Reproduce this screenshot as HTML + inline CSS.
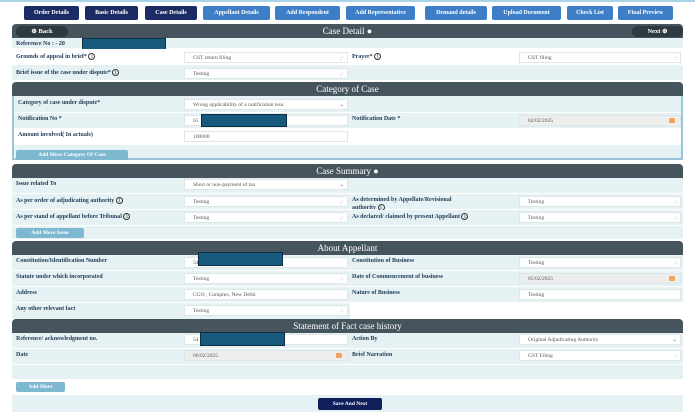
<!DOCTYPE html>
<html><head><style>
*{margin:0;padding:0;box-sizing:border-box}
body{width:695px;height:420px;background:#fff;font-family:"Liberation Serif",serif;position:relative;overflow:hidden}
.a{position:absolute}
.nb{position:absolute;top:6px;height:14px;border-radius:2px;color:#fff;font-size:6px;text-align:center;line-height:14px;font-weight:bold}
.dk{background:#1b2b63}.lt{background:#3d7ec6}
.hd{position:absolute;left:12px;width:671px;height:14px;background:#46545d;color:#fff;font-size:9px;text-align:center;line-height:14px;border-radius:4px 4px 0 0}
.row{position:absolute;left:12px;width:671px;background:#e5f1f2;border-bottom:1px solid #fff}
.row.w{background:#fff}
.lb{position:absolute;font-size:6px;font-weight:bold;color:#1e3a56;line-height:7px}
.in{position:absolute;height:11px;background:#fff;border:1px solid #dde6e8;font-size:5.5px;color:#555;line-height:10px;padding-left:8px}
.in.g{background:#eeeeee}
.red{position:absolute;background:#175a7e;border:1px solid #0c2f44}
.cal{position:absolute;width:6px;height:5px;background:#f4a35a;border-radius:1px}
.ab{position:absolute;height:10px;background:#7db8d0;color:#fff;font-size:5.5px;font-weight:bold;line-height:10px;text-align:center;border-radius:2px}
.i{font-size:6px;font-weight:normal;border:1px solid #333;border-radius:50%;display:inline-block;width:7px;height:7px;line-height:6px;text-align:center;color:#333}
.vl{position:absolute;width:1px;background:#fff}
.rs{position:absolute;font-size:5px;color:#888;line-height:5px}
</style></head><body>
<div class="a" style="left:0;top:0;width:695px;height:2px;background:#a9d3e6"></div>
<div class="nb dk" style="left:24px;width:55px">Order Details</div>
<div class="nb dk" style="left:85px;width:53px">Basic Details</div>
<div class="nb dk" style="left:145px;width:52px">Case Details</div>
<div class="nb lt" style="left:203px;width:67px">Appellant Details</div>
<div class="nb lt" style="left:275px;width:65px">Add Respondent</div>
<div class="nb lt" style="left:346px;width:69px">Add Representative</div>
<div class="nb lt" style="left:425px;width:62px">Demand details</div>
<div class="nb lt" style="left:492px;width:69px">Upload Document</div>
<div class="nb lt" style="left:567px;width:46px">Check List</div>
<div class="nb lt" style="left:618px;width:55px">Final Preview</div>

<div class="hd" style="top:24px">Case Detail ●</div>
<div class="a" style="left:16px;top:26px;width:52px;height:11px;background:#2f3a40;border-radius:6px;color:#fff;font-size:6.5px;line-height:11px;text-align:center;font-weight:bold">⊕ Back</div>
<div class="a" style="left:632px;top:26px;width:51px;height:11px;background:#2f3a40;border-radius:6px;color:#fff;font-size:6.5px;line-height:11px;text-align:center;font-weight:bold">Next ⊕</div>
<div class="row" style="top:38px;height:11px"></div>
<div class="lb" style="left:16px;top:41px">Reference No : - 20</div>
<div class="red" style="left:82px;top:38px;width:84px;height:12px"></div>
<div class="row w" style="top:49px;height:16px"></div>
<div class="lb" style="left:16px;top:53px">Grounds of appeal in brief* <span class="i">i</span></div>
<div class="in" style="left:184px;top:52px;width:164px">GST return filing</div>
<div class="lb" style="left:352px;top:53px">Prayer* <span class="i">i</span></div>
<div class="in" style="left:519px;top:52px;width:162px">GST filing</div>
<div class="row" style="top:65px;height:16px"></div>
<div class="lb" style="left:16px;top:69px">Brief issue of the case under dispute* <span class="i">i</span></div>
<div class="in" style="left:184px;top:68px;width:164px">Testing</div>

<div class="hd" style="top:82px">Category of Case</div>
<div class="a" style="left:12px;top:96px;width:671px;height:64px;border:2px solid #9cc4d8;border-top:none;background:#e5f1f2"></div>
<div class="row" style="top:97px;height:16px;left:14px;width:667px"></div>
<div class="lb" style="left:18px;top:100px">Category of case under dispute*</div>
<div class="in" style="left:184px;top:99px;width:164px">Wrong applicability of a notification issu<span style="float:right;padding-right:3px">⌄</span></div>
<div class="row" style="top:113px;height:16px;left:14px;width:667px"></div>
<div class="lb" style="left:18px;top:116px">Notification No *</div>
<div class="in" style="left:184px;top:115px;width:164px">65</div>
<div class="red" style="left:201px;top:114px;width:86px;height:13px"></div>
<div class="lb" style="left:352px;top:116px">Notification Date *</div>
<div class="in g" style="left:519px;top:115px;width:162px">02/02/2025</div>
<div class="cal" style="left:669px;top:118px"></div>
<div class="row w" style="top:129px;height:16px;left:14px;width:667px"></div>
<div class="lb" style="left:18px;top:132px">Amount involved( In actuals)</div>
<div class="in" style="left:184px;top:131px;width:164px">100000</div>
<div class="ab" style="left:16px;top:150px;width:112px">Add More Category Of Case</div>

<div class="hd" style="top:164px">Case Summary ●</div>
<div class="row" style="top:178px;height:16px"></div>
<div class="lb" style="left:16px;top:181px">Issue related To</div>
<div class="in" style="left:184px;top:179px;width:164px">Short or non-payment of tax<span style="float:right;padding-right:3px">⌄</span></div>
<div class="row" style="top:194px;height:16px"></div>
<div class="lb" style="left:16px;top:197px">As per order of adjudicating authority <span class="i">i</span></div>
<div class="in" style="left:184px;top:196px;width:164px">Testing</div>
<div class="lb" style="left:352px;top:197px">As determined by Appellate/Revisional<br>authority <span class="i">i</span></div>
<div class="in" style="left:519px;top:196px;width:162px">Testing</div>
<div class="row" style="top:210px;height:16px"></div>
<div class="lb" style="left:16px;top:213px">As per stand of appellant before Tribunal <span class="i">i</span></div>
<div class="in" style="left:184px;top:212px;width:164px">Testing</div>
<div class="lb" style="left:352px;top:213px">As declared/ claimed by present Appellant <span class="i">i</span></div>
<div class="in" style="left:519px;top:212px;width:162px">Testing</div>
<div class="row" style="top:226px;height:14px"></div>
<div class="ab" style="left:16px;top:228px;width:68px">Add More Issue</div>

<div class="hd" style="top:241px">About Appellant</div>
<div class="row" style="top:255px;height:16px"></div>
<div class="lb" style="left:16px;top:258px">Constitution/Identification Number</div>
<div class="in" style="left:184px;top:257px;width:164px">54</div>
<div class="red" style="left:198px;top:252px;width:85px;height:14px"></div>
<div class="lb" style="left:352px;top:258px">Constitution of Business</div>
<div class="in" style="left:519px;top:257px;width:162px">Testing</div>
<div class="row" style="top:271px;height:16px"></div>
<div class="lb" style="left:16px;top:274px">Statute under which incorporated</div>
<div class="in" style="left:184px;top:273px;width:164px">Testing</div>
<div class="lb" style="left:352px;top:274px">Date of Commencement of business</div>
<div class="in g" style="left:519px;top:273px;width:162px">05/02/2025</div>
<div class="cal" style="left:669px;top:276px"></div>
<div class="row" style="top:287px;height:16px"></div>
<div class="lb" style="left:16px;top:290px">Address</div>
<div class="in" style="left:184px;top:289px;width:164px">CGO , Complex, New Delhi</div>
<div class="lb" style="left:352px;top:290px">Nature of Business</div>
<div class="in" style="left:519px;top:289px;width:162px">Testing</div>
<div class="row w" style="top:303px;height:16px"></div>
<div class="a" style="left:12px;top:303px;width:338px;height:16px;background:#e5f1f2"></div>
<div class="lb" style="left:16px;top:306px">Any other relevant fact</div>
<div class="in" style="left:184px;top:305px;width:164px">Testing</div>

<div class="hd" style="top:319px">Statement of Fact case history</div>
<div class="row" style="top:333px;height:16px"></div>
<div class="lb" style="left:16px;top:336px">Reference/ acknowledgment no.</div>
<div class="in" style="left:184px;top:334px;width:164px">54</div>
<div class="red" style="left:200px;top:332px;width:85px;height:14px"></div>
<div class="lb" style="left:352px;top:336px">Action By</div>
<div class="in" style="left:519px;top:334px;width:162px">Original Adjudicating Authority<span style="float:right;padding-right:3px">⌄</span></div>
<div class="row" style="top:349px;height:16px"></div>
<div class="lb" style="left:16px;top:352px">Date</div>
<div class="in g" style="left:184px;top:350px;width:164px">06/02/2025</div>
<div class="cal" style="left:336px;top:353px"></div>
<div class="lb" style="left:352px;top:352px">Brief Narration</div>
<div class="in" style="left:519px;top:350px;width:162px">GST Filing</div>
<div class="row" style="top:365px;height:15px"></div>
<div class="row w" style="top:380px;height:15px"></div>
<div class="ab" style="left:16px;top:382px;width:49px">Add More</div>
<div class="row" style="top:395px;height:18px"></div>
<div class="a" style="left:318px;top:398px;width:64px;height:12px;background:#0f1f5c;color:#fff;font-size:5.5px;font-weight:bold;text-align:center;line-height:12px;border-radius:2px">Save And Next</div>

<div class="rs" style="left:341px;top:52px">·<br>⁄</div>
<div class="rs" style="left:675px;top:52px">·<br>⁄</div>
<div class="rs" style="left:341px;top:68px">·<br>⁄</div>
<div class="rs" style="left:341px;top:196px">·<br>⁄</div>
<div class="rs" style="left:341px;top:212px">·<br>⁄</div>
<div class="rs" style="left:675px;top:196px">·<br>⁄</div>
<div class="rs" style="left:675px;top:212px">·<br>⁄</div>
<div class="rs" style="left:675px;top:257px">·<br>⁄</div>
<div class="rs" style="left:341px;top:273px">·<br>⁄</div>
<div class="rs" style="left:341px;top:305px">·<br>⁄</div>
<div class="rs" style="left:675px;top:350px">·<br>⁄</div>
</body></html>
